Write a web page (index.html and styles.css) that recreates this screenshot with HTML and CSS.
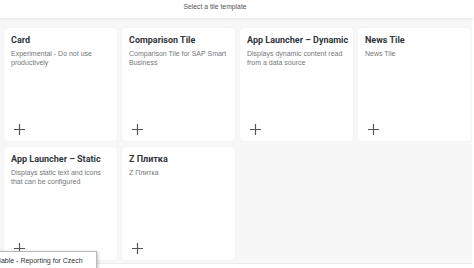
FILE: index.html
```html
<!DOCTYPE html>
<html lang="en">

<head>
    <meta charset="UTF-8">
    <meta name="viewport" content="width=device-width, initial-scale=1.0">
    <title>Select a tile template</title>
    <link rel="stylesheet" href="styles.css">
</head>

<body>
    <header class="dialog-header">Select a tile template</header>

    <main class="tile-list">
        <div class="tile">
            <h2 class="tile-title">Card</h2>
            <p class="tile-desc">Experimental - Do not use productively</p>
            <svg class="tile-add" viewBox="0 0 12 12"><path d="M6 0v12M0 6h12" /></svg>
        </div>
        <div class="tile">
            <h2 class="tile-title">Comparison Tile</h2>
            <p class="tile-desc">Comparison Tile for SAP Smart Business</p>
            <svg class="tile-add" viewBox="0 0 12 12"><path d="M6 0v12M0 6h12" /></svg>
        </div>
        <div class="tile">
            <h2 class="tile-title">App Launcher – Dynamic</h2>
            <p class="tile-desc">Displays dynamic content read from a data source</p>
            <svg class="tile-add" viewBox="0 0 12 12"><path d="M6 0v12M0 6h12" /></svg>
        </div>
        <div class="tile">
            <h2 class="tile-title">News Tile</h2>
            <p class="tile-desc">News Tile</p>
            <svg class="tile-add" viewBox="0 0 12 12"><path d="M6 0v12M0 6h12" /></svg>
        </div>
        <div class="tile">
            <h2 class="tile-title">App Launcher – Static</h2>
            <p class="tile-desc">Displays static text and icons that can be configured</p>
            <svg class="tile-add" viewBox="0 0 12 12"><path d="M6 0v12M0 6h12" /></svg>
        </div>
        <div class="tile">
            <h2 class="tile-title">Z Плитка</h2>
            <p class="tile-desc">Z Плитка</p>
            <svg class="tile-add" viewBox="0 0 12 12"><path d="M6 0v12M0 6h12" /></svg>
        </div>
    </main>

    <div class="tooltip">Variable - Reporting for Czech</div>
</body>

</html>
```

FILE: styles.css
```css
* {
    margin: 0;
    padding: 0;
    box-sizing: border-box;
}

body {
    background: #fff;
    color: #32363a;
    font-family: "Liberation Sans", Arial, sans-serif;
    width: 474px;
    height: 268px;
    overflow: hidden;
    position: relative;
}

.dialog-header {
    height: 18px;
    padding-right: 44px;
    text-align: center;
    font-size: 6.8px;
    line-height: 14px;
    color: #555;
    background: #fff;
    box-shadow: 0 1px 3px rgba(0, 0, 0, 0.08);
    position: relative;
}

.tile-list {
    width: 472px;
    height: 246px;
    background: #f7f7f7;
    padding: 10px 4px;
    display: grid;
    grid-template-columns: repeat(4, 113px);
    grid-auto-rows: 113px;
    column-gap: 5px;
    row-gap: 6px;
    align-content: start;
    border-bottom: 1px solid #ececec;
}

.tile {
    background: #fff;
    border-radius: 4px;
    box-shadow: 0 0 2px rgba(0, 0, 0, 0.06);
    padding: 6px 7px 6px 7px;
    display: flex;
    flex-direction: column;
}

.tile-title {
    font-family: Roboto, "Liberation Sans", sans-serif;
    font-size: 9px;
    font-weight: 700;
    line-height: 13px;
    white-space: nowrap;
    color: #32363a;
}

.tile-desc {
    font-size: 7px;
    line-height: 9px;
    color: #74777a;
    margin-top: 2px;
}

.tile-add {
    margin-top: auto;
    margin-left: 3px;
    width: 11px;
    height: 11px;
    stroke: #555;
    stroke-width: 1.3;
    fill: none;
}

.tooltip {
    position: absolute;
    left: -18px;
    top: 251px;
    width: 115px;
    height: 24px;
    padding: 5px 6px 0 6px;
    background: #fff;
    border: 1px solid #bbb;
    box-shadow: 1px 1px 3px rgba(0, 0, 0, 0.25);
    font-size: 7px;
    color: #32363a;
}
```
